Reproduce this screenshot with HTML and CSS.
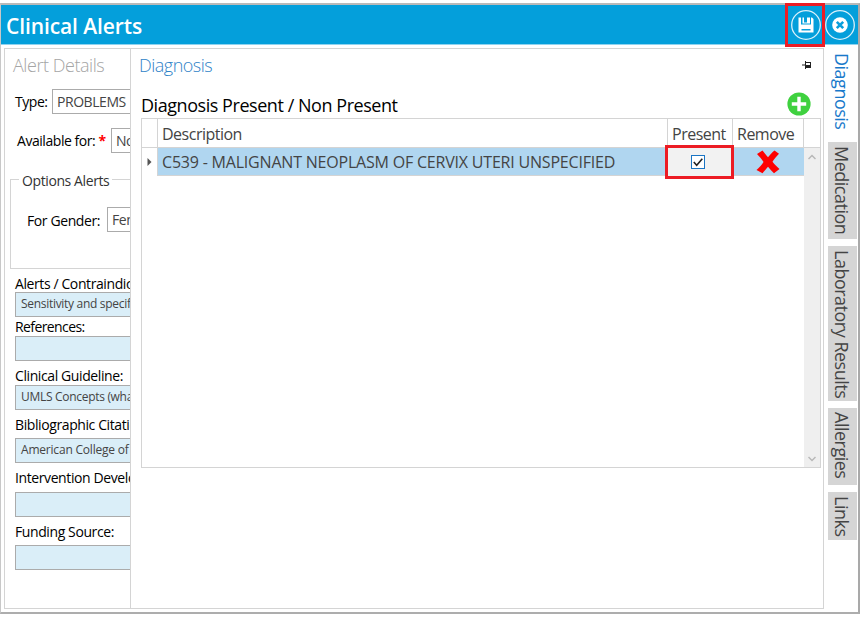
FILE: index.html
```html
<!DOCTYPE html>
<html lang="en">
<head>
    <meta charset="UTF-8">
    <meta name="viewport" content="width=device-width, initial-scale=1.0">
    <title>Clinical Alerts</title>
    <link rel="stylesheet" href="styles.css">
</head>
<body>
    <div class="window">
        <div class="titlebar">
            <h1>Clinical Alerts</h1>
            <button class="roundButton" title="Save">
                <svg width="32" height="32" viewBox="0 0 32 32">
                    <circle cx="16" cy="16" r="14.3" fill="none" stroke="#d9f0fa" stroke-width="1.3"/>
                    <path fill="#fff" d="M8.500 8.500H11v7h10v-7h1l1.500 1.500v13.500h-15z"/>
                    <path fill="#fff" d="M12.500 8.500h1.500v5h3v-5h3v6h-7.500z"/>
                    <path fill="#0a9fdc" d="M11.500 20h9v1.500h-9z"/>
                </svg>
            </button>
            <button class="roundButton" title="Close">
                <svg width="32" height="32" viewBox="0 0 32 32">
                    <circle cx="16" cy="16" r="14.3" fill="none" stroke="#d9f0fa" stroke-width="1.3"/>
                    <circle cx="16" cy="16" r="7.8" fill="#fff"/>
                    <path stroke="#0a9fdc" stroke-width="2.6" d="M12.8 12.8l6.4 6.4M19.2 12.8l-6.4 6.4"/>
                </svg>
            </button>
            <div class="highlight highlightSave"></div>
        </div>

        <div class="content">
            <div class="panels">
                <div class="details">
                    <h2>Alert Details</h2>
                    <div class="row rowType">
                        <label>Type:</label>
                        <div class="combo">PROBLEMS</div>
                    </div>
                    <div class="row rowAvailable">
                        <label>Available for: <b>*</b></label>
                        <div class="combo">None</div>
                    </div>
                    <div class="options">
                        <span class="legend">Options Alerts</span>
                        <div class="row rowGender">
                            <label>For Gender:</label>
                            <div class="combo">Female</div>
                        </div>
                    </div>
                    <div class="field alerts">
                        <label>Alerts / Contraindications:</label>
                        <div class="box">Sensitivity and specificity</div>
                    </div>
                    <div class="field references">
                        <label>References:</label>
                        <div class="box"></div>
                    </div>
                    <div class="field guideline">
                        <label>Clinical Guideline:</label>
                        <div class="box">UMLS Concepts (what)</div>
                    </div>
                    <div class="field citation">
                        <label>Bibliographic Citation:</label>
                        <div class="box">American College of</div>
                    </div>
                    <div class="field developer">
                        <label>Intervention Developer:</label>
                        <div class="box"></div>
                    </div>
                    <div class="field funding">
                        <label>Funding Source:</label>
                        <div class="box"></div>
                    </div>
                </div>

                <div class="diagnosis">
                    <div class="panelHead">
                        <h2>Diagnosis</h2>
                        <svg class="pin" width="10" height="8" viewBox="0 0 10 8">
                            <path fill="#222" d="M0 3.5h3v1H0zM3 0h1v8H3zM4 1h5v6H4z"/>
                            <path fill="#fff" d="M4 2h4v2H4z"/>
                        </svg>
                    </div>
                    <div class="subHead">
                        <h3>Diagnosis Present / Non Present</h3>
                        <svg class="add" width="24" height="24" viewBox="0 0 24 24">
                            <circle cx="12" cy="12" r="11.6" fill="#3fd13f"/>
                            <path fill="#fff" d="M10.300 4.800h3.400v5.500h5.500v3.400h-5.500v5.500h-3.400v-5.500H4.800v-3.400h5.500z"/>
                        </svg>
                    </div>
                    <div class="grid">
                        <div class="gridHead">
                            <div></div>
                            <div class="desc">Description</div>
                            <div class="present">Present</div>
                            <div class="remove">Remove</div>
                            <div></div>
                        </div>
                        <div class="gridBody">
                            <div class="gridRow">
                                <div class="marker">
                                    <svg width="5" height="8" viewBox="0 0 5 8"><path fill="#555" d="M0.500 0L4.500 4L0.500 8z"/></svg>
                                </div>
                                <div class="desc">C539 - MALIGNANT NEOPLASM OF CERVIX UTERI UNSPECIFIED</div>
                                <div class="check">
                                    <svg width="14" height="14" viewBox="0 0 14 14">
                                        <rect x="0.500" y="0.500" width="13" height="13" fill="#fff" stroke="#1a75c4"/>
                                        <path fill="none" stroke="#222" stroke-width="1.6" d="M2.800 7l2.900 3.200L11.300 3.800"/>
                                    </svg>
                                    <div class="highlight highlightCheck"></div>
                                </div>
                                <div class="cross">
                                    <svg width="24" height="24" viewBox="0 0 24 24">
                                        <path fill="#fe0000" d="M1 4L6.500 0.500C8 2.500 10 5 12 7.200C14 5 16 2.500 18.500 0.500L23 3.800C20.500 6.500 18 9 16.500 11.800C18.500 14.500 21 17 23.500 19L18 23.300C16 21.500 14 19 12 16.800C10 19 8 21.500 6.500 23.300L0.500 20C3.500 17.500 6 14.500 7.500 12C5.500 9 3.500 6.500 1 4z"/>
                                    </svg>
                                </div>
                            </div>
                            <div class="scrollbar">
                                <svg width="8" height="6" viewBox="0 0 8 6"><path fill="none" stroke="#b8b8b8" stroke-width="1.500" d="M0.500 5L4 1.500L7.500 5"/></svg>
                                <svg width="8" height="6" viewBox="0 0 8 6"><path fill="none" stroke="#b8b8b8" stroke-width="1.500" d="M0.500 1L4 4.500L7.500 1"/></svg>
                            </div>
                        </div>
                    </div>
                </div>
            </div>

            <div class="tabs">
                <div class="tab active">Diagnosis</div>
                <div class="tab medication">Medication</div>
                <div class="tab laboratory">Laboratory Results</div>
                <div class="tab allergies">Allergies</div>
                <div class="tab links">Links</div>
            </div>
        </div>
    </div>
</body>
</html>
```
FILE: styles.css
```css
* {
    box-sizing: border-box;
}
body {
    font-family: "Open Sans", "Noto Sans", sans-serif;
    background-color: white;
    color: black;
    margin: 0;
    padding-top: 3px;
    overflow: hidden;
}
h1, h2, h3 {
    margin: 0;
    font-weight: normal;
    white-space: nowrap;
}
svg {
    display: block;
}
.window {
    width: 860px;
    height: 611px;
    border: 1px solid #c8c8c8;
    border-top: 2px solid #b9b9b9;
    border-right: 2px solid #a9a9a9;
    border-bottom: 2px solid #adadad;
    display: flex;
    flex-direction: column;
}
.titlebar {
    position: relative;
    height: 40px;
    flex: none;
    background-color: #049fdb;
    border-bottom: 1px solid #8fd3ef;
    display: flex;
    align-items: center;
    gap: 2px;
    padding: 0 2px 0 5px;
}
.titlebar h1 {
    flex: 1;
    color: white;
    font-size: 21px;
    font-weight: 600;
    line-height: 40px;
    letter-spacing: -0.1px;
    padding-top: 3px;
}
.roundButton {
    width: 32px;
    height: 32px;
    padding: 0;
    border: none;
    background: none;
    cursor: pointer;
}
.highlight {
    position: absolute;
    border: 3px solid #ec1c24;
}
.highlightSave {
    right: 33px;
    top: -2px;
    width: 40px;
    height: 44px;
}
.content {
    flex: 1;
    display: flex;
    gap: 4px;
    padding: 3px 0 3px 3px;
}
.panels {
    width: 820px;
    height: 561px;
    border: 1px solid #d4d4d4;
    display: flex;
}
.details {
    width: 125px;
    overflow: hidden;
    white-space: nowrap;
    font-size: 14px;
    letter-spacing: -0.45px;
}
.details h2 {
    color: #a5a5a5;
    font-size: 18px;
    font-weight: 300;
    line-height: 33px;
    height: 40px;
    padding-left: 8px;
}
.row {
    display: flex;
    align-items: center;
}
.row label {
    flex: none;
}
.row b {
    color: red;
}
.combo {
    flex: none;
    width: 160px;
    height: 25px;
    border: 1px solid #ababab;
    color: #444;
    padding-left: 4px;
    line-height: 24px;
}
.rowType {
    padding-left: 10px;
}
.rowType label {
    width: 37px;
}
.rowAvailable {
    padding-left: 12px;
    margin-top: 14px;
}
.rowAvailable label {
    width: 94px;
}
.options {
    position: relative;
    width: 300px;
    height: 90px;
    margin: 26px 0 0 5px;
    border: 1px solid #d4d4d4;
    padding: 27px 0 0 16px;
    letter-spacing: -0.4px;
}
.legend {
    position: absolute;
    left: 8px;
    top: -9px;
    padding: 0 3px;
    background-color: white;
    color: #333;
    line-height: 20px;
}
.rowGender label {
    width: 80px;
    padding-top: 2px;
}
.field {
    width: 300px;
    margin-left: 10px;
    letter-spacing: -0.4px;
}
.field label {
    display: block;
    height: 16px;
    line-height: 16px;
}
.box {
    height: 25px;
    border: 1px solid #ababab;
    background-color: #daeef8;
    color: #444;
    font-size: 12px;
    letter-spacing: -0.3px;
    line-height: 22px;
    padding-left: 5px;
}
.alerts {
    margin-top: 7px;
}
.references {
    margin-top: 2px;
    letter-spacing: -0.6px;
}
.guideline {
    margin-top: 7px;
}
.citation, .developer, .funding {
    margin-top: 7px;
}
.references .box, .guideline .box {
    margin-top: 1px;
}
.citation .box, .funding .box {
    margin-top: 5px;
    letter-spacing: -0.2px;
}
.developer .box {
    margin-top: 6px;
}
.diagnosis {
    flex: 1;
    border-left: 1px solid #d4d4d4;
    padding: 0 2px 0 10px;
}
.panelHead {
    display: flex;
    justify-content: space-between;
    padding-right: 9px;
    height: 43px;
}
.panelHead h2 {
    color: #2f83c8;
    font-size: 18px;
    font-weight: 300;
    letter-spacing: -0.5px;
    line-height: 33px;
    margin-left: -2px;
}
.pin {
    margin-top: 12px;
}
.subHead {
    display: flex;
    justify-content: space-between;
    height: 26px;
    padding-right: 10px;
}
.subHead h3 {
    font-size: 18px;
    letter-spacing: -0.45px;
    line-height: 27px;
}
.grid {
    height: 350px;
    border: 1px solid #d4d4d4;
    display: flex;
    flex-direction: column;
    color: #444;
    font-size: 16px;
}
.gridHead {
    display: grid;
    grid-template-columns: 16px 510px 65px 71px 16px;
    height: 29px;
    line-height: 31px;
    letter-spacing: -0.5px;
    border-bottom: 1px solid #d4d4d4;
}
.gridHead div {
    border-right: 1px solid #d4d4d4;
    white-space: nowrap;
}
.gridHead div:last-child {
    border-right: none;
}
.desc, .present, .remove {
    padding-left: 4px;
}
.gridBody {
    flex: 1;
    display: flex;
}
.gridRow {
    flex: 1;
    display: grid;
    grid-template-columns: 16px 510px 65px 1fr;
    height: 28px;
    line-height: 28px;
    letter-spacing: -0.2px;
    background-color: #b0d6f0;
    border-bottom: 1px solid #d4d4d4;
    white-space: nowrap;
}
.marker {
    display: flex;
    align-items: center;
    justify-content: center;
    background-color: white;
    border-right: 1px solid #d4d4d4;
}
.check {
    position: relative;
    display: flex;
    align-items: center;
    padding-left: 23px;
    background-color: #f2f2f2;
}
.highlightCheck {
    left: -3px;
    top: -3px;
    width: 69px;
    height: 34px;
}
.cross {
    display: flex;
    align-items: center;
    justify-content: center;
    padding-right: 1px;
}
.scrollbar {
    width: 16px;
    background-color: #efefef;
    display: flex;
    flex-direction: column;
    justify-content: space-between;
    align-items: center;
    padding: 6px 0 5px;
}
.tabs {
    width: 29px;
    display: flex;
    flex-direction: column;
    gap: 7px;
}
.tab {
    writing-mode: vertical-rl;
    width: 29px;
    line-height: 30px;
    padding-top: 4px;
    background-color: #d5d5d5;
    color: #444;
    font-size: 18px;
    letter-spacing: -0.5px;
    white-space: nowrap;
}
.active {
    height: 87px;
    padding-top: 5px;
    background-color: white;
    color: #1979ca;
}
.medication {
    height: 97px;
}
.laboratory {
    height: 155px;
}
.allergies {
    height: 77px;
}
.links {
    height: 48px;
}
```
